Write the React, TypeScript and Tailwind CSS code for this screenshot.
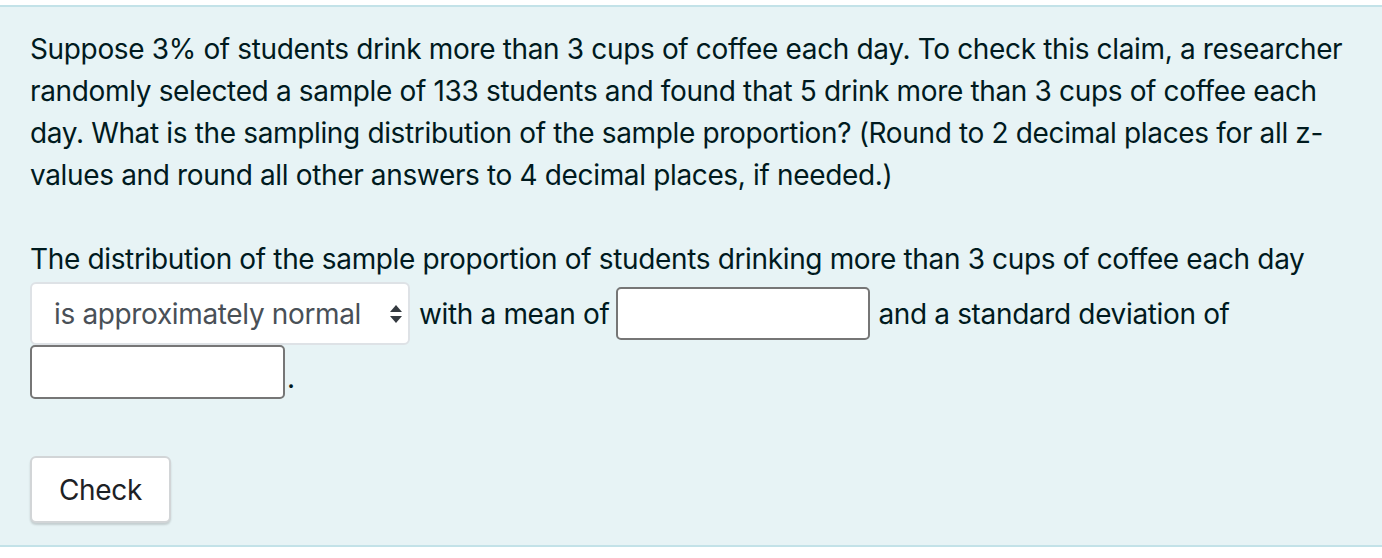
export default function App() {
  return (
    <div className="min-h-screen bg-white pt-[5px]" style={{ fontFamily: 'Inter, "Liberation Sans", Arial, sans-serif' }}>
      <div className="border-y-2 border-[#c3e2e8] bg-[#e7f3f5] px-[30px] pt-[21px] pb-[22px] text-[28px] leading-[42px] tracking-[-0.35px] text-[#001a1e]">
        <p className="mb-[42px]">
          Suppose 3% of students drink more than 3 cups of coffee each day. To check this claim, a researcher
          <br />
          randomly selected a sample of 133 students and found that 5 drink more than 3 cups of coffee each
          <br />
          day. What is the sampling distribution of the sample proportion? (Round to 2 decimal places for all z-
          <br />
          values and round all other answers to 4 decimal places, if needed.)
        </p>
        <p>The distribution of the sample proportion of students drinking more than 3 cups of coffee each day</p>
        <div className="mt-[2px] flex items-center">
          <div className="flex h-[63px] w-[380px] items-center justify-between rounded-[6px] border-2 border-[#dee2e6] bg-white pl-[22px] pr-[5px] text-[#495057]">
            <span>is approximately normal</span>
            <svg width="14" height="22" viewBox="0 0 14 22">
              <path d="M7 2 L13 9 H1 Z" fill="#343a40" />
              <path d="M7 20 L13 13 H1 Z" fill="#343a40" />
            </svg>
          </div>
          <span className="ml-[9px]">with a mean of</span>
          <input className="ml-[7px] h-[53px] w-[254px] rounded-[5px] border-2 border-[#767676] bg-white" />
          <span className="ml-[8px]">and a standard deviation of</span>
        </div>
        <div className="flex items-end">
          <input className="h-[54px] w-[255px] rounded-[5px] border-2 border-[#767676] bg-white" />
          <span className="ml-[2px] leading-[42px]">.</span>
        </div>
        <button className="mt-[57px] h-[67px] w-[141px] rounded-[6px] border-2 border-[#d2d5d7] bg-white text-[#1d2125] shadow-[0_2px_2px_rgba(0,0,0,0.15)]">
          Check
        </button>
      </div>
    </div>
  );
}
